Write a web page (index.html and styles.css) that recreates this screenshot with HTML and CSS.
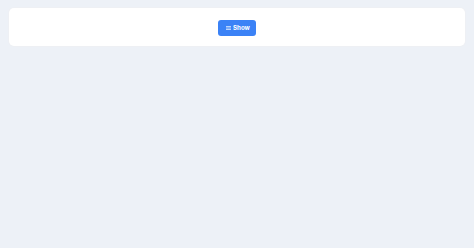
FILE: index.html
```html
<!DOCTYPE html>
<html>
<head>
<meta charset="utf-8">
<link rel="stylesheet" href="styles.css">
</head>
<body>
<div class="card">
  <button class="btn">
    <svg class="icon" width="5" height="4" viewBox="0 0 5 4"><rect x="0" y="0" width="5" height="0.8" fill="#dbe8ff"/><rect x="0" y="1.6" width="5" height="0.8" fill="#dbe8ff"/><rect x="0" y="3.2" width="5" height="0.8" fill="#dbe8ff"/></svg>
    <span>Show</span>
  </button>
</div>
</body>
</html>
```

FILE: styles.css
```css
html, body { margin: 0; height: 100%; }
body {
  background: #edf1f7;
  padding: 8px 9px;
  box-sizing: border-box;
  font-family: Inter, "Liberation Sans", sans-serif;
}
.card {
  background: #ffffff;
  border-radius: 5px;
  height: 38px;
  display: flex;
  align-items: center;
  justify-content: center;
  box-shadow: 0 0 0 1px #eef0f4;
}
.btn {
  display: flex;
  align-items: center;
  gap: 2px;
  height: 16px;
  width: 38px;
  padding: 0 0 0 8px;
  border: none;
  border-radius: 3px;
  background: #3b82f6;
  color: #fff;
  font-family: inherit;
  font-size: 6.2px;
  font-weight: 700;
  margin-top: 1px;
}
.icon { display: block; }
```
